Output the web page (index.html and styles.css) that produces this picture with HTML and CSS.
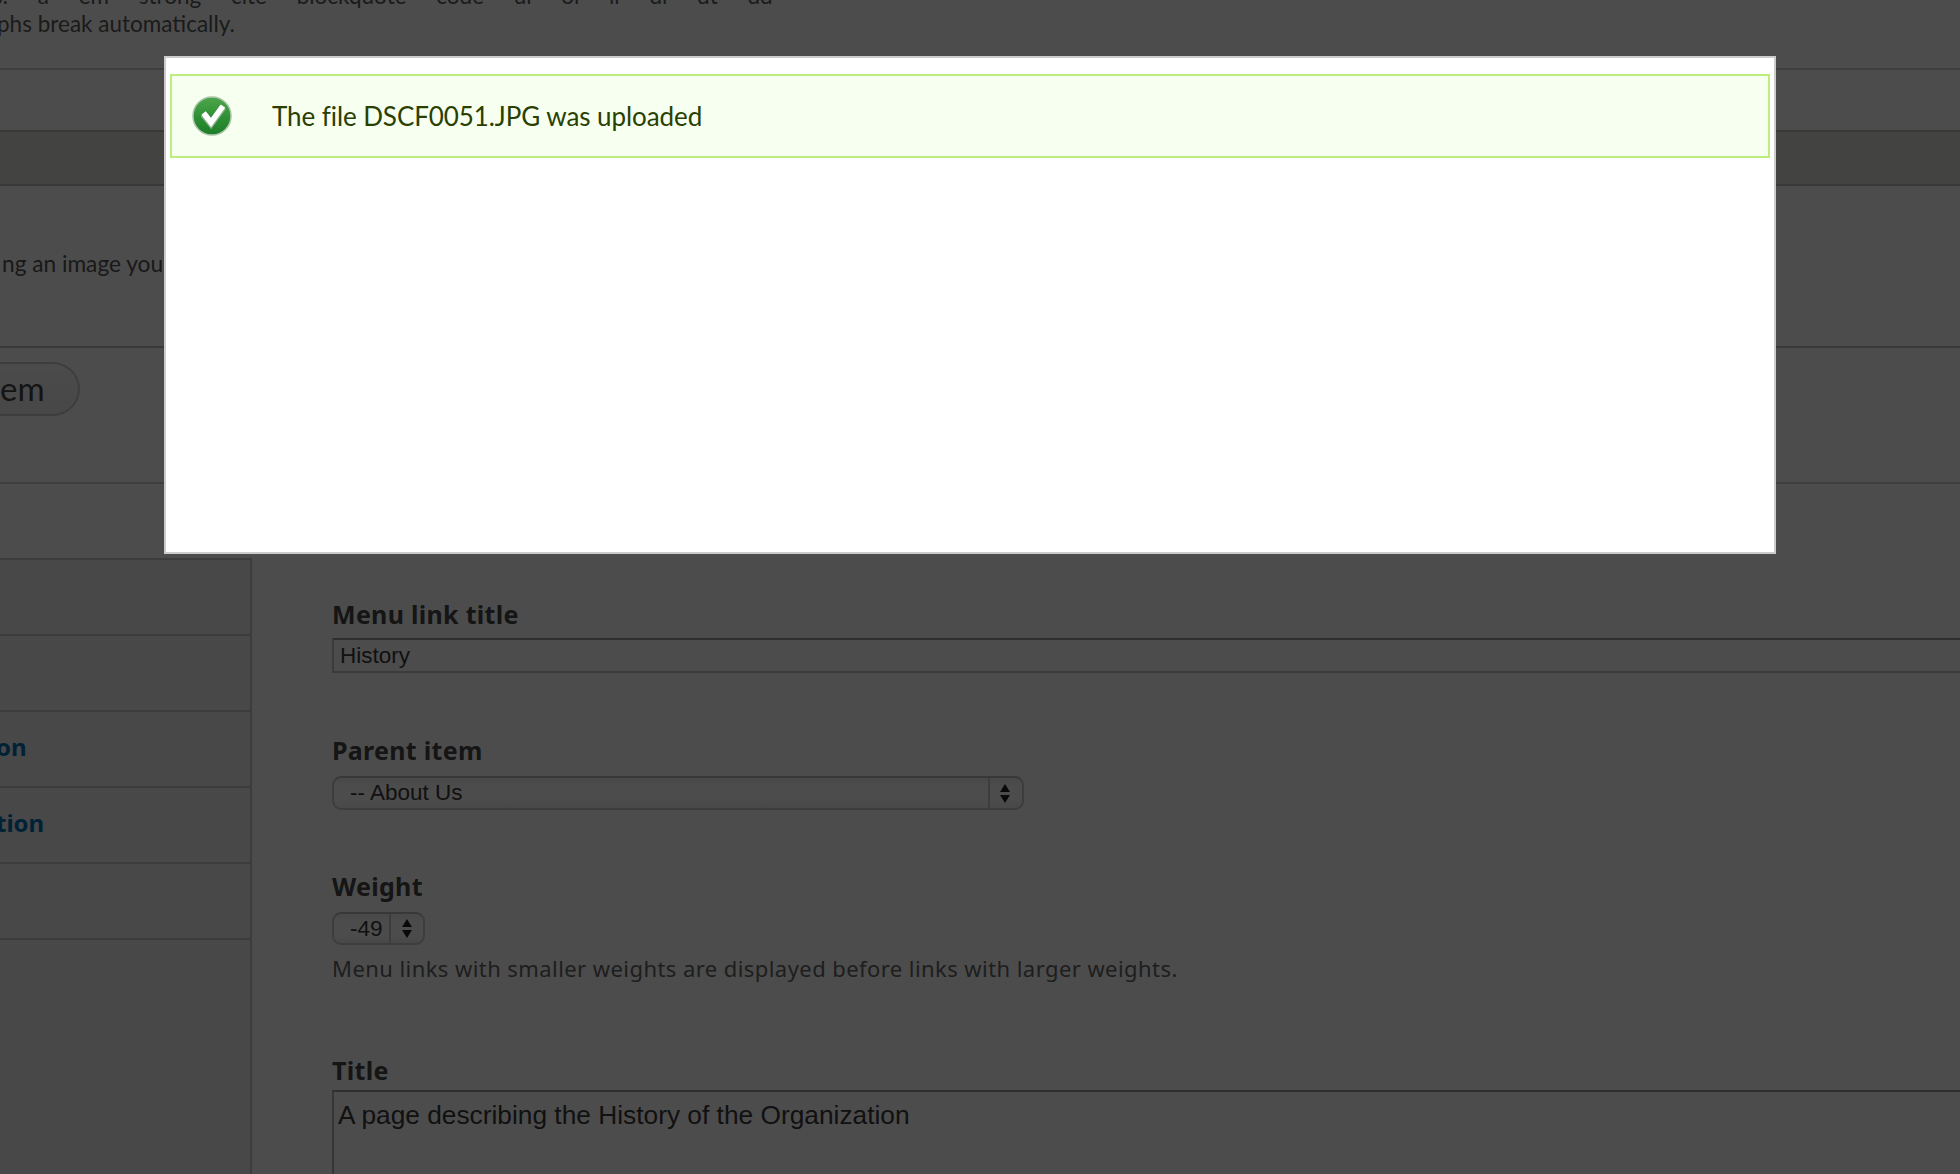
FILE: index.html
```html
<!DOCTYPE html>
<html lang="en">
<head>
<meta charset="utf-8">
<title>Upload complete</title>
<link rel="stylesheet" href="styles.css">
</head>
<body>
<div class="page">
  <section class="tips">
    <p class="tags"><span>gs:</span><span>a</span><span>em</span><span>strong</span><span>cite</span><span>blockquote</span><span>code</span><span>ul</span><span>ol</span><span>li</span><span>dl</span><span>dt</span><span>dd</span></p>
    <p class="tips-line">phs break automatically.</p>
  </section>
  <div class="bar"></div>
  <div class="band"></div>
  <section class="intro"><p>ng an image you</p></section>
  <section class="actions"><button class="pill" type="button">em</button></section>
  <div class="main">
    <nav class="side">
      <div class="tab"></div>
      <div class="tab"></div>
      <div class="tab"><a href="#">on</a></div>
      <div class="tab"><a href="#">tion</a></div>
      <div class="tab"></div>
    </nav>
    <form class="form">
      <div class="field field-link">
        <label>Menu link title</label>
        <div class="textbox">History</div>
      </div>
      <div class="field field-parent">
        <label>Parent item</label>
        <div class="select select-wide"><span class="select-value">-- About Us</span><span class="arrows"><svg viewBox="0 0 12 19" width="12" height="19"><path d="M6 0l5 8H1zM6 19l-5-8h10z"/></svg></span></div>
      </div>
      <div class="field field-weight">
        <label>Weight</label>
        <div class="select select-small"><span class="select-value">-49</span><span class="arrows"><svg viewBox="0 0 12 19" width="12" height="19"><path d="M6 0l5 8H1zM6 19l-5-8h10z"/></svg></span></div>
        <p class="help">Menu links with smaller weights are displayed before links with larger weights.</p>
      </div>
      <div class="field field-title">
        <label>Title</label>
        <div class="textarea">A page describing the History of the Organization</div>
      </div>
    </form>
  </div>
</div>
<div class="overlay"></div>
<div class="modal">
  <div class="message">
    <svg class="ok" viewBox="0 0 40 40" width="40" height="40">
      <defs>
        <linearGradient id="okfill" x1="0" y1="0" x2="0" y2="1">
          <stop offset="0" stop-color="#4fa64c"/>
          <stop offset="0.55" stop-color="#2c8f33"/>
          <stop offset="1" stop-color="#1f7d2a"/>
        </linearGradient>
      </defs>
      <circle cx="20" cy="20" r="19" fill="url(#okfill)" stroke="#a9c4a9" stroke-width="1.5"/>
      <path d="M11.5 18l7.5 9.5L31 11" fill="none" stroke="#8fb392" stroke-width="7"/>
      <path d="M11.5 17l7.5 9.5L31 10" fill="none" stroke="#fff" stroke-width="5.5"/>
    </svg>
    <span>The file DSCF0051.JPG was uploaded</span>
  </div>
</div>
</body>
</html>
```
FILE: styles.css
```css
* { box-sizing: border-box; }
html, body { margin: 0; height: 100%; }
body {
  position: relative;
  height: 1174px;
  overflow: hidden;
  background: #fff;
  color: #5a5a5a;
  font-family: Lato, "Noto Sans", sans-serif;
}
p { margin: 0; }
.page { height: 1174px; overflow: hidden; }

.tips { height: 70px; border-bottom: 2px solid #cfcfcf; font-size: 22.5px; overflow: hidden; }
.tags { display: flex; gap: 29.7px; height: 13px; line-height: 13px; margin: -11px 0 0 -19px; white-space: nowrap; }
.tips-line { margin-top: 8px; margin-left: -3px; line-height: 28px; }
.bar { height: 62px; border-bottom: 2px solid #bbb; }
.band { height: 54px; background: #e0e0da; border-bottom: 2px solid #bbb; }

.intro { height: 162px; border-bottom: 2px solid #c1c1c1; padding: 63px 0 0 2px; font-size: 22.7px; line-height: 30px; white-space: nowrap; color: #555; }
.actions { height: 136px; border-bottom: 2px solid #cfcfcf; padding-top: 14px; }
.pill {
  display: block; width: 80px; height: 54px; margin: 0; padding: 0 35px 2px 0;
  border: 2px solid #cdcdcd; border-left: 0; border-radius: 0 27px 27px 0;
  background: linear-gradient(#fbfbfb, #efefef);
  font: 33px Lato, sans-serif; color: #444; text-align: right;
}

.main { display: grid; grid-template-columns: 252px 1fr; padding-top: 74px; height: 690px; }
.side { background: #f0f0f0; border-top: 2px solid #c8c8c8; border-right: 2px solid #c8c8c8; }
.tab { height: 76px; border-bottom: 2px solid #c8c8c8; font-family: "Noto Sans", sans-serif; font-size: 24px; font-weight: 700; line-height: 69px; white-space: nowrap; }
.tab a { margin-left: -4px; color: #0074b8; text-decoration: none; }

.form { padding-left: 80px; min-width: 0; }
.field label { display: block; color: #464646; font-family: "Noto Sans", sans-serif; font-size: 25px; font-weight: 700; line-height: 32px; letter-spacing: .3px; }
.field-link { padding-top: 40px; }
.field-parent { padding-top: 61px; }
.field-weight { padding-top: 60px; }
.field-title { padding-top: 68px; }

.textbox {
  height: 35px; margin-top: 8px; padding: 0 0 0 6px;
  border: 2px solid #c5c5c5; border-top-color: #9d9d9d; border-right: 0;
  font: 22.5px/31px "Liberation Sans", Arial, sans-serif; color: #3a3a3a; background: #fff;
}
.select {
  display: flex; margin-top: 10px;
  border: 2px solid #cdcdcd; border-top-color: #bcbcbc; border-radius: 9px;
  background: linear-gradient(#f2f2f2, #fff 30%, #fff 70%, #f2f2f2);
  font: 22.5px/30px "Liberation Sans", Arial, sans-serif; color: #3a3a3a;
}
.select-wide { width: 692px; height: 34px; }
.select-small { width: 93px; height: 33px; }
.select-value { flex: 1; padding-left: 16px; }
.arrows { display: flex; align-items: center; justify-content: center; width: 34px; border-left: 2px solid #cdcdcd; }
.select-wide .arrows { padding-right: 2px; }
.arrows svg { fill: #1f1f1f; }
.help { margin-top: 5px; font-family: "Noto Sans", sans-serif; font-size: 22px; line-height: 36px; letter-spacing: .43px; color: #666; }
.textarea {
  height: 120px; margin-top: 4px; padding: 6px 0 0 4px;
  border-top: 2px solid #9d9d9d; border-left: 2px solid #b5b5b5;
  font: 26.3px/34px "Liberation Sans", Arial, sans-serif; color: #3a3a3a; background: #fff;
}

.overlay { position: absolute; inset: 0; background: rgba(0, 0, 0, .7); }
.modal {
  position: absolute; left: 164px; top: 56px; width: 1612px; height: 498px;
  padding: 16px 4px 0;
  background: #fff; border: 2px solid #ccc;
}
.message {
  display: flex; align-items: center; height: 84px; padding-left: 20px; gap: 40px;
  background: #f6fff0; border: 2px solid #bbee7c;
  color: #2a4000; font-size: 26px; letter-spacing: -.08px;
}
.ok { flex: none; }
```
